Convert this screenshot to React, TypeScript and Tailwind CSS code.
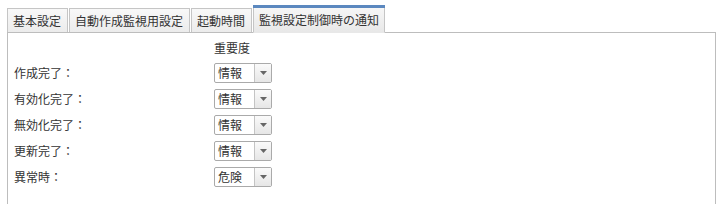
import React from 'react';

const tabs = ['基本設定', '自動作成監視用設定', '起動時間'];

const rows = [
  { label: '作成完了：', value: '情報' },
  { label: '有効化完了：', value: '情報' },
  { label: '無効化完了：', value: '情報' },
  { label: '更新完了：', value: '情報' },
  { label: '異常時：', value: '危険' },
];

function Select({ value }: { value: string }) {
  return (
    <div className="flex h-[20px] w-[58px] rounded-[2px] border border-[#aaaaaa] bg-white">
      <div className="flex flex-1 items-center pl-[3px] text-[12px] leading-none text-[#333]">{value}</div>
      <div className="flex w-[17px] items-center justify-center border-l border-[#c4c4c4] bg-gradient-to-b from-[#fafafa] to-[#e6e6e6]">
        <svg width="7" height="4" viewBox="0 0 7 4">
          <path d="M0 0h7L3.5 4z" fill="#666" />
        </svg>
      </div>
    </div>
  );
}

export default function App() {
  return (
    <div
      className="h-[204px] w-[725px] bg-white pl-[7px] pr-[9px] pt-[5px] text-[12px] text-[#333]"
      style={{ fontFamily: '"Noto Sans CJK JP", "Liberation Sans", sans-serif' }}
    >
      {/* tab strip */}
      <div className="flex items-end gap-[1px]">
        {tabs.map((t) => (
          <div
            key={t}
            className="flex h-[24px] items-center border border-b-0 border-[#c5c5c5] bg-gradient-to-b from-[#f8f8f8] to-[#ececec] pl-[5px] pr-[6px] leading-none"
          >
            {t}
          </div>
        ))}
        <div className="relative -mb-px flex h-[28px] items-center border-x border-b border-[#c5c5c5] border-b-[#e8e8e8] bg-gradient-to-b from-[#f8f8f8] to-[#e8e8e8] px-[5px] pt-[3px] leading-none">
          <div className="absolute inset-x-[-1px] top-0 h-[3px] bg-[#5b88bf]" />
          監視設定制御時の通知
        </div>
      </div>

      {/* panel */}
      <div className="h-[172px] border-x border-t border-[#bdbdbd] pl-[6px] pt-[4px]">
        <div className="flex h-[22px] items-center">
          <div className="w-[200px]" />
          <div className="leading-none">重要度</div>
        </div>
        <div className="mt-[4px] flex flex-col gap-[6px]">
          {rows.map((r) => (
            <div key={r.label} className="flex h-[20px] items-center">
              <div className="w-[200px] leading-none">{r.label}</div>
              <Select value={r.value} />
            </div>
          ))}
        </div>
      </div>
    </div>
  );
}
